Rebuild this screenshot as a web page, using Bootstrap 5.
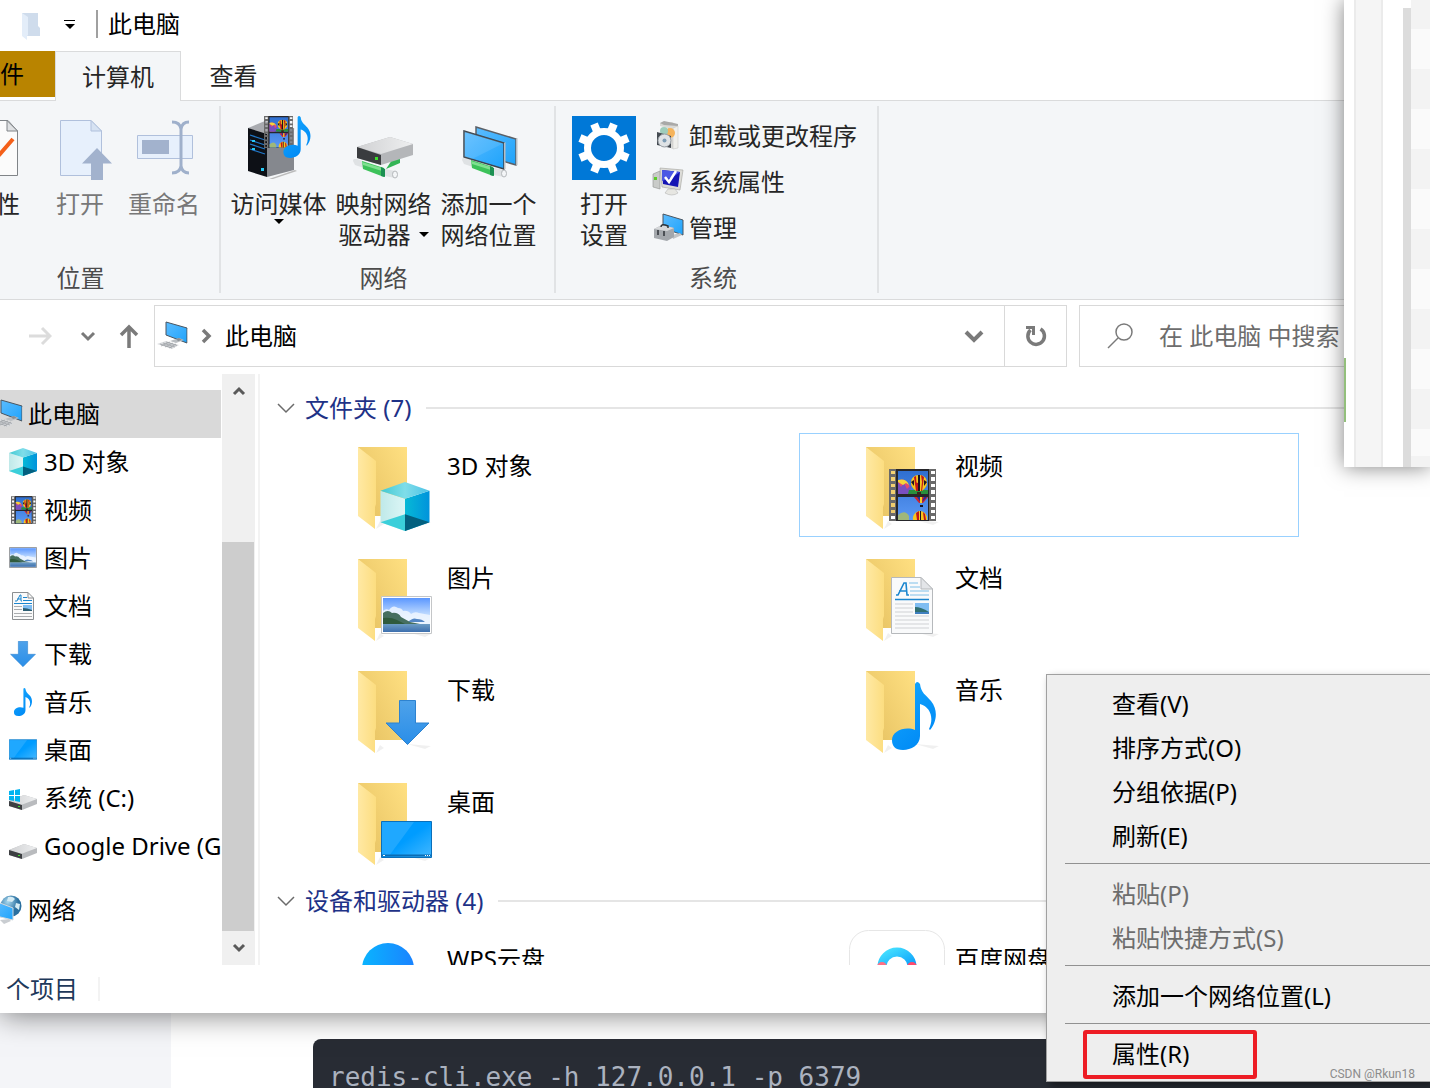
<!DOCTYPE html>
<html lang="zh-CN">
<head>
<meta charset="utf-8">
<meta name="viewport" content="width=device-width, initial-scale=1">
<title>此电脑</title>
<link href="https://cdn.jsdelivr.net/npm/bootstrap@5.3.0/dist/css/bootstrap.min.css" rel="stylesheet">
<style>
  body { font-family: "Noto Sans", "Noto Sans CJK SC", sans-serif; font-size: 24px; line-height: 32px; color: #000; background: #fff; }
  button, input { font: inherit; color: inherit; }
  button { background: none; border: 0; padding: 0; }
  a { color: inherit; text-decoration: none; }
  svg { flex: none; display: block; }
  .ico { width: 32px; height: 32px; }

  .explorer { min-height: 0; background: #fff; box-shadow: 0 2px 28px rgba(0,0,0,.5); z-index: 1; }
  .title-row { height: 51px; padding: 0 0 4px 20px; }
  .title-rule { width: 2px; height: 28px; background: #a0a0a0; margin: 0 10px 0 20px; }

  .tab-row { height: 50px; border-bottom: 1px solid #dadbdc; }
  .tab-file { width: 55px; height: 46px; background: #b98400; padding-right: 32px; overflow: hidden; }
  .tab-on { width: 126px; height: 50px; background: #f4f6f8; border: 1px solid #dadbdc; border-bottom: 0; color: #262626; }
  .tab-off { width: 105px; color: #262626; }

  .ribbon { background: #f4f6f8; border-bottom: 1px solid #dadbdc; height: 199px; color: #262626; }
  .r-group { height: 187px; margin-top: 5px; border-right: 2px solid #e1e3e5; }
  .r-place { width: 221px; }
  .r-net { padding: 0 13px 0 5px; }
  .r-sys { width: 323px; padding-right: 7px; }
  .r-btn { width: 105px; padding-top: 10px; line-height: 31px; white-space: nowrap; }
  .r-btn > svg { width: 64px; height: 64px; margin-bottom: 8px; }
  .r-btn:disabled { color: #787878; }
  .w-cut { width: 40px; padding-right: 20px; }
  .w-open { width: 80px; }
  .w-name { width: 88px; }
  .w-set { width: 96px; }
  .r-list { padding-top: 7px; }
  .r-list button { height: 46px; gap: 5px; }
  .r-name { color: #4c4c4c; margin-bottom: -1px; }
  .r-place .r-name { padding-right: 58px; }

  .addr-row { height: 74px; padding: 5px 0 7px 28px; }
  .addr-box { height: 62px; border: 1px solid #d9d9d9; padding-left: 2px; }
  .refresh { width: 62px; height: 60px; border-left: 1px solid #d9d9d9; }
  .find-box { width: 351px; height: 62px; border: 1px solid #d9d9d9; padding-left: 27px; gap: 26px; }
  .find-box input { border: 0; outline: 0; padding: 0; background: none; min-width: 0; }
  .find-box input::placeholder { color: #6d6d6d; opacity: 1; }

  .panes { min-height: 0; }
  .tree { width: 222px; padding: 16px 1px 0 0; white-space: nowrap; }
  .tree a { height: 48px; gap: 4px; padding-left: 8px; overflow: hidden; }
  .tree .root { padding-left: 0; }
  .tree .root svg { margin-left: -8px; }
  .tree .on { background: #d9d9d9; }
  .tree .apart { margin-top: 16px; }
  .s-bar { width: 33px; background: #f0f0f0; }
  .s-bar button { height: 34px; }
  .s-thumb { width: 32px; height: 389px; background: #cdcdcd; margin-top: 134px; }
  .split { width: 5px; border-right: 2px solid #f3f3f3; }

  .files { padding-top: 9px; }
  .sect { height: 50px; padding-left: 17px; gap: 10px; color: #1e3287; }
  .sect + .tiles + .sect { margin-top: 3px; }
  .sect i { height: 2px; background: #e5e5e5; margin-left: 5px; }
  .tiles { display: grid; grid-template-columns: repeat(auto-fill, 500px); gap: 8px; padding-left: 31px; }
  .tile { height: 104px; padding: 3px 0 0 49px; gap: 10px; border: 1px solid transparent; }
  .tile.hot { border-color: #99d1ff; }
  .tile svg { width: 96px; height: 96px; }
  .tile span { margin-top: 13px; }

  .status { height: 48px; padding-left: 6px; color: #1e395b; }
  .status i { width: 2px; height: 24px; background: #f3f3f3; margin-left: 20px; }

  .article { height: 75px; }
  .side { width: 171px; background: #f4f5f8; }
  .snippet { margin: 26px 0 0 142px; padding: 22px 16px; background: #282c34; color: #abb2bf; border-radius: 8px 0 0 0; font: 26px/32px "DejaVu Sans Mono", monospace; overflow: hidden; }

  .other { top: 0; right: 0; width: 86px; height: 467px; background: #fff; box-shadow: 0 0 20px rgba(0,0,0,.5); z-index: 2; }
  .other .mark-green { width: 2px; height: 64px; margin-top: 358px; background: #93bf7c; }
  .other .band { width: 29px; margin-left: 8px; background: #f5f5f5; border: solid #ebebeb; border-width: 0 2px; }
  .other .rail { width: 8px; margin: 8px 0 0 20px; background: #dcdcdc; }
  .other .rows { background: repeating-linear-gradient(#f3f3f3 0 40px, #fafafa 40px 80px) 0 -11px; }

  .ctx { top: 674px; right: 0; width: 384px; padding: 7px 0 5px; background: #eee; border: 1px solid #a0a0a0; border-right: 0; box-shadow: 4px 4px 8px rgba(0,0,0,.45); z-index: 3; }
  .ctx button { display: block; width: 100%; height: 44px; padding-left: 65px; text-align: left; }
  .ctx button:disabled { color: #6d6d6d; }
  .ctx hr { margin: 5px 0 8px 18px; border-top: 1px solid #919191; opacity: 1; }
  .ring { left: 36px; bottom: 2px; width: 174px; height: 49px; border: 4px solid #ed1c24; border-radius: 3px; pointer-events: none; }
  .credit { right: 15px; bottom: 0; font: 12px/14px Roboto, sans-serif; color: #8c8c8c; }
</style>
</head>
<body>
<svg width="0" height="0" class="position-absolute" aria-hidden="true">
  <defs>
    <linearGradient id="gBack" x1="0" x2="1" y1=".7" y2="0"><stop offset="0" stop-color="#e8c464"/><stop offset="1" stop-color="#ffe082"/></linearGradient>
    <linearGradient id="gFlap" x1="0" x2="1"><stop offset="0" stop-color="#ffe9a4"/><stop offset="1" stop-color="#fcdd80"/></linearGradient>
    <linearGradient id="gCubeR"><stop offset="0" stop-color="#07b9d6"/><stop offset="1" stop-color="#0093dc"/></linearGradient>
    <linearGradient id="gCubeL"><stop offset="0" stop-color="#bfe9e9"/><stop offset="1" stop-color="#dcf6f6"/></linearGradient>
    <linearGradient id="gCubeT"><stop offset="0" stop-color="#40c9d2"/><stop offset=".5" stop-color="#7fdde9"/><stop offset="1" stop-color="#4cc2e6"/></linearGradient>
    <linearGradient id="gSky" x2="0" y2="1"><stop offset="0" stop-color="#5b97ff"/><stop offset=".6" stop-color="#d7ebff"/></linearGradient>
    <linearGradient id="gSea" x2="0" y2="1"><stop offset="0" stop-color="#6c9cc4"/><stop offset="1" stop-color="#3d6fae"/></linearGradient>
    <linearGradient id="gDown" x2="0" y2="1"><stop offset="0" stop-color="#4ea2ea"/><stop offset="1" stop-color="#2a8ee8"/></linearGradient>
    <linearGradient id="gNote" x2=".6" y2="1"><stop offset="0" stop-color="#17a9ff"/><stop offset="1" stop-color="#008af5"/></linearGradient>
    <linearGradient id="gDesk" x1="0" x2="1" y2="1"><stop offset=".5" stop-color="#009cff"/><stop offset="1" stop-color="#44b8ff"/></linearGradient>
    <linearGradient id="gScr" x2="1" y2="1"><stop offset="0" stop-color="#5bbcff"/><stop offset="1" stop-color="#1ea3fb"/></linearGradient>
    <linearGradient id="gTop" x2="1"><stop offset="0" stop-color="#d0d1d3"/><stop offset="1" stop-color="#eeeff0"/></linearGradient>
    <linearGradient id="gBaidu" x2="1" y2="1"><stop offset="0" stop-color="#45e0ff"/><stop offset="1" stop-color="#0a9dfb"/></linearGradient>
    <linearGradient id="gWps" x2="1" y2="0"><stop offset="0" stop-color="#0ab4ff"/><stop offset="1" stop-color="#1a83ff"/></linearGradient>
    <linearGradient id="gFilmSky" x2="0" y2="1"><stop offset="0" stop-color="#2f6fd0"/><stop offset="1" stop-color="#5a98f5"/></linearGradient>
    <radialGradient id="gGlobe" cx=".35" cy=".3"><stop offset="0" stop-color="#a8d8f0"/><stop offset="1" stop-color="#2a6f9f"/></radialGradient>
  </defs>

  <symbol id="folder" viewBox="0 0 96 96">
    <path d="M35 92l8-5-4-3zM66 83l24 2-6 3z" fill="#000" opacity=".06"/>
    <path d="M17 10h49v69H17z" fill="url(#gBack)"/>
    <path d="M17 10l18 14v43l-1 3v22L17 79z" fill="url(#gFlap)"/>
  </symbol>

  <symbol id="cube" viewBox="0 0 50 50">
    <path d="M0 9L25 17V50L0 41z" fill="url(#gCubeL)"/>
    <path d="M50 9L25 17V50L50 41z" fill="url(#gCubeR)"/>
    <path d="M25 0L50 9 25 17 0 9z" fill="url(#gCubeT)"/>
    <path d="M0 41L25 33V50z" fill="#3bcfda"/>
    <path d="M50 41L25 33V50z" fill="#03607f"/>
  </symbol>

  <symbol id="balloon" viewBox="0 0 16 20">
    <path d="M8 0c5 0 8 3 8 8 0 4-3 6-5 8H5C3 14 0 12 0 8c0-5 3-8 8-8z" fill="#f7c51e"/>
    <path d="M3 2l2 14h1L5 1zM8 0L7 8l-3-1 1 9h3zM10 0l3 2-2 14h-1l1-9z" fill="#c0151a"/>
    <path d="M7 0h2v16H7zM0 7l3-2v6zM16 7l-3-2v6z" fill="#1c1420"/>
    <path d="M6 17h4v3H6z" fill="#3a2418"/>
  </symbol>
  <symbol id="film" viewBox="0 0 47 52">
    <path fill="#6a6a6a" fill-rule="evenodd" d="M0 0h47v52H0zM2 2v3h4V2zm0 6v4h4V8zm0 7v3h4v-3zm0 6v4h4v-4zm0 7v3h4v-3zm0 6v4h4v-4zm0 7v3h4v-3zm0 6v3h4v-3zM42 2v3h4V2zm0 6v4h4V8zm0 7v3h4v-3zm0 6v4h4v-4zm0 7v3h4v-3zm0 6v4h4v-4zm0 7v3h4v-3zm0 6v3h4v-3z"/>
    <path d="M7 0h33v52H7z" fill="#26262a"/>
    <path d="M9 2h30v23H9zM9 28h30v23H9z" fill="url(#gFilmSky)"/>
    <path d="M9 12q7-5 12 6l-4 7H9z" fill="#e24a70"/>
    <path d="M9 13l3 5 3-4 3 6 4-4-1 9H9z" fill="#7a4fc0"/>
    <path d="M9 11q8-2 11 5l-3-2-3 2-5-3z" fill="#f6d53a"/>
    <path d="M20 21h19v4H19z" fill="#2a8f3c"/>
    <path d="M9 46q7-6 11 1v4H9z" fill="#9fb77a"/>
    <use href="#balloon" x="22" y="6" width="16" height="20"/>
    <path d="M25 28h14l-5 6h-4z" fill="#d4232a"/><path d="M28 28h3l1 6zM35 28h3l-5 5z" fill="#1d2fa0"/><path d="M31 28h2v6h-2z" fill="#f3d028"/><path d="M31 36h3v2h-3z" fill="#1c1420"/>
    <path d="M24 51c-1-5 3-9 7-9s8 4 7 9z" fill="#f7c51e"/><path d="M27 44l1 7h2V42zM34 43l1 8h2l-1-6z" fill="#c0151a"/><path d="M31 42h1v9h-1z" fill="#1c1420"/>
  </symbol>

  <symbol id="photo" viewBox="0 0 51 38">
    <path d="M.5.500h50v37H.5z" fill="#fff" stroke="#c4c6c8"/>
    <path d="M2 2h47v34H2z" fill="url(#gSky)"/>
    <path d="M2 15q3-3 6-1 4-6 9-2 4 0 5 3 5-1 8 3 4-3 8-1l11 2v9H2z" fill="#eef6ff" opacity=".85"/>
    <path d="M27 26q5-5 9-3 5 0 8 3z" fill="#5486c4"/>
    <path d="M2 17q5-4 9 0 6-1 9 4l9 5 10 2H2z" fill="#466f60"/>
    <path d="M2 22q8-1 14 2l8 4H2z" fill="#2f5a3c"/>
    <path d="M2 28h47v8H2z" fill="url(#gSea)"/>
  </symbol>

  <symbol id="paper" viewBox="0 0 42 57">
    <path d="M.5.500H30L41.500 12V56.500H.5z" fill="#f9fafb" stroke="#b6b9bc"/>
    <path d="M30 .5V12h11.500z" fill="#e3e5e8" stroke="#b6b9bc"/>
    <path d="M5 18h2l6-12h2l1 12h2M8 14h7" fill="none" stroke="#1b86cf" stroke-width="1.600"/>
    <path d="M18 6h9M19 10h10M19 14h19M19 18h19" stroke="#7fc0e8"/>
    <path d="M4 22.500h34" stroke="#1b86cf" stroke-width="1.500"/>
    <path d="M4 27h18M4 31h18M4 35h18M4 39h34M4 43h34M4 47h34M4 51h34" stroke="#cfd1d4"/>
    <path d="M24 26h14v11H24z" fill="#7fbdf2"/><path d="M24 30q6 0 14 5v2H24z" fill="#2f6f72"/><path d="M24 35h14v2H24z" fill="#3f7fc0"/>
  </symbol>
  <symbol id="down" viewBox="0 0 45 45"><path d="M14.500.5h16V23H44L22.500 44.500 1 23h13.500z" fill="url(#gDown)" stroke="#2e83d0"/></symbol>
  <symbol id="tune" viewBox="0 0 44 68"><path d="M23 2q2-4 5 0c1 9 6 11 11 17 8 10 5 22-1 29l-1-1c5-10 2-22-9-25v32c0 9-9 14-17 14S0 64 0 58c0-9 13-14 23-10z" fill="url(#gNote)"/></symbol>
  <symbol id="desk" viewBox="0 0 51 37"><path d="M.5.500h50v36H.5z" fill="url(#gDesk)" stroke="#0a6fba"/><path d="M1 1h32L8 35H1z" fill="#fff" opacity=".12"/><path d="M1 34.500h49" stroke="#0b6cb4" stroke-width="2"/><path d="M2 34.500h2M44 34.500h1M46 34.500h1M48 34.500h1" stroke="#fff"/></symbol>
  <symbol id="pc" viewBox="0 0 32 32">
    <path d="M9 2l21 6v15L9 15z" fill="url(#gScr)" stroke="#4a5560"/>
    <path d="M30 8l1 1v14l-1 0z" fill="#ccc"/>
    <path d="M13 21l9-3 5 2-8 3z" fill="#b9bdc1"/><path d="M19 19l2 2 4-1-3-2z" fill="#888d92"/>
    <path d="M0 24l9-3 13 4-7 4z" fill="#d8dadd"/><path d="M3 24l12 4M6 23l12 4M9 22l11 3.500M4 26l9-4M8 27l8-4M12 28l7-4" stroke="#989ca1" stroke-width=".7" fill="none"/>
  </symbol>
  <symbol id="drive" viewBox="0 0 28 15">
    <path d="M0 6L15 0l13 4v5l-15 6L0 11z" fill="#b9bbbe"/><path d="M0 6L15 0l13 4-16 6z" fill="url(#gTop)"/><path d="M0 6l13 4v5L0 11z" fill="#3d3f42"/><path d="M9 11h2v1H9z" fill="#3ee02c"/>
  </symbol>
  <symbol id="pipe" viewBox="0 0 46 20">
    <path d="M0 2q0-3 4-2l10 4v6L2 6z" fill="#dfe2e4"/><path d="M32 10l10 2v7l-10-2z" fill="#dfe2e4"/>
    <path d="M9 2l22 7v9L10 10z" fill="#3cc25a"/><path d="M9 3l20 6v3L10 6z" fill="#7fe090"/><path d="M28 8l4 2v8l-4-1z" fill="#1b8f52"/><ellipse cx="42" cy="15.500" rx="2.500" ry="3.500" fill="#f4f6f8" stroke="#b4b8bb"/>
  </symbol>
</svg>

<div class="d-flex flex-column vh-100 overflow-hidden position-relative">
  <section class="explorer d-flex flex-column flex-grow-1 position-relative" aria-label="此电脑">
    <header class="title-row d-flex align-items-center flex-shrink-0">
      <svg width="24" height="32" viewBox="0 0 24 32"><path d="M2 5h16v13l2 2v8H2z" fill="#cfdcec"/><path d="M2 5l6 4v18l-1 1v4L2 28z" fill="#e3edf9"/></svg>
      <button type="button" class="ms-3" aria-label="自定义快速访问工具栏"><svg width="16" height="16" viewBox="0 0 16 16"><path d="M4 4.500h11" stroke="#000"/><path d="M5 8h10l-5 5z"/></svg></button>
      <div class="title-rule"></div>
      <span>此电脑</span>
    </header>

    <nav class="tab-row d-flex flex-shrink-0">
      <button type="button" class="tab-file text-end">件</button>
      <button type="button" class="tab-on">计算机</button>
      <button type="button" class="tab-off">查看</button>
    </nav>

    <div class="ribbon d-flex flex-shrink-0">
      <div class="r-group r-place d-flex flex-column justify-content-between">
        <div class="d-flex">
          <button type="button" class="r-btn w-cut d-flex flex-column align-items-end">
            <svg viewBox="0 0 64 64"><path d="M5.500 4.500H52L61.500 15V59.500H5.500z" fill="#fbfbfb" stroke="#808488"/><path d="M51 4.500V15h10.500z" fill="#dfe1e3" stroke="#808488"/><path d="M40 35l4 3 13-15" fill="none" stroke="#f4601a" stroke-width="4"/></svg>
            <span>性</span></button>
          <button type="button" class="r-btn w-open d-flex flex-column align-items-center" disabled>
            <svg viewBox="0 0 64 64"><path d="M12.500 4.500H43L53.500 15V59.500H12.500z" fill="#e7f0fc" stroke="#b0c0dc"/><path d="M43 4.500V15h10.500z" fill="#d6e2f2" stroke="#b0c0dc"/><path d="M49 32l15 15.500H55V64H43V47.500H34z" fill="#a2b2cd"/></svg>
            <span>打开</span></button>
          <button type="button" class="r-btn w-name d-flex flex-column align-items-center" disabled>
            <svg viewBox="0 0 64 64"><path d="M5.500 19.500h55v23h-55z" fill="#e7f0fc" stroke="#b0c0dc"/><path d="M10 24h27v14H10z" fill="#a2b2cd"/><path d="M40 6q8 0 9 7 1-7 8-7M40 57q8 0 9-7 1 7 8 7M49 12v40" fill="none" stroke="#9fb0cb" stroke-width="3"/></svg>
            <span>重命名</span></button>
        </div>
        <div class="r-name text-center">位置</div>
      </div>

      <div class="r-group r-net d-flex flex-column justify-content-between">
        <div class="d-flex">
          <button type="button" class="r-btn d-flex flex-column align-items-center">
            <svg viewBox="0 0 64 64"><path d="M22 63l26-9 2 1-24 8z" fill="#bbb"/><path d="M1 12L18 5l30 8-28 7z" fill="#a9abb0"/><path d="M20 17l27-5v42L20 61z" fill="#85888e"/><path d="M1 12l19 6v43L1 55z" fill="#0d1016"/><path d="M3 19l15 5M3 28l15 5M3 33l15 5M3 24l15 5" stroke="#2177c8" stroke-width="1.300"/><path d="M5 24h3v2H5zM5 32h3v2H5zM14 52h3v3h-3z" fill="#25c8f5"/><use href="#film" x="17" y="0" width="29" height="32" preserveAspectRatio="none"/><use href="#tune" x="36" y="0" width="28" height="42" preserveAspectRatio="none"/></svg>
            <span>访问媒体</span>
            <svg class="mt-0" style="width:10px;height:5px" viewBox="0 0 10 5"><path d="M0 0h10L5 5z"/></svg></button>
          <button type="button" class="r-btn d-flex flex-column align-items-center">
            <svg viewBox="0 0 64 64"><use href="#pipe" x="1" y="43" width="46" height="20"/><path d="M40 44l8-2v5l-14 6z" fill="#34b556"/><path d="M5 31L38 21l23 7v11L29 49 5 42z" fill="#b4b6b9"/><path d="M5 31L38 21l23 7-32 10z" fill="url(#gTop)"/><path d="M5 31l24 8v10L5 42z" fill="#3a3c3f"/><path d="M23 41h3v3h-3z" fill="#3ee02c"/></svg>
            <span>映射网络</span>
            <span class="d-flex align-items-center">驱动器<svg class="ms-2" width="10" height="5" viewBox="0 0 10 5"><path d="M0 0h10L5 5z"/></svg></span></button>
          <button type="button" class="r-btn d-flex flex-column align-items-center">
            <svg viewBox="0 0 64 64"><use href="#pipe" x="5" y="42" width="46" height="20"/><path d="M19 11l40 12v26L19 37z" fill="url(#gScr)" stroke="#5b6067" stroke-width="1.500"/><path d="M59 23l1.500-1v27L59 50z" fill="#b9bdc1"/><path d="M7 15l40 12v26L7 41z" fill="url(#gScr)" stroke="#3b444d" stroke-width="1.500"/><path d="M7 15l40 12L15 43l-8-2z" fill="#fff" opacity=".1"/><path d="M47 27l1.500-1v27L47 54z" fill="#b9bdc1"/></svg>
            <span>添加一个</span><span>网络位置</span></button>
        </div>
        <div class="r-name text-center">网络</div>
      </div>

      <div class="r-group r-sys d-flex flex-column justify-content-between">
        <div class="d-flex">
          <button type="button" class="r-btn w-set d-flex flex-column align-items-center">
            <svg viewBox="0 0 64 64"><path d="M0 0h64v64H0z" fill="#0078d7"/><g fill="#fff"><g id="cogs"><path id="tooth" d="M28 13V6h8v7z" transform="rotate(22.500 32 32)"/><use href="#tooth" transform="rotate(45 32 32)"/><use href="#tooth" transform="rotate(90 32 32)"/><use href="#tooth" transform="rotate(135 32 32)"/></g><use href="#cogs" transform="rotate(180 32 32)"/></g><circle cx="32" cy="32" r="16.500" fill="none" stroke="#fff" stroke-width="7"/></svg>
            <span>打开</span><span>设置</span></button>
          <div class="r-list">
            <button type="button" class="d-flex align-items-center"><svg class="ico" viewBox="0 0 32 32"><path d="M8 3l12-1 6 3v22l-6 2-4-4V8L8 6z" fill="#d9d9d6"/><path d="M8 3l4-2 14 3v2L12 5z" fill="#a9a9a8"/><path d="M21 8l5-2v22l-5 1z" fill="#efefec" stroke="#c2c2c0" stroke-width=".5"/><circle cx="18" cy="13" r="5" fill="#f5b35a"/><circle cx="12" cy="11" r="4" fill="#9fcdbb"/><path d="M5 12l14 4v12L5 25z" fill="#454b52"/><circle cx="12.500" cy="20.500" r="6.500" fill="#dfe3e6" stroke="#9aa0a6"/><circle cx="12.500" cy="20.500" r="2" fill="#7d9cb4"/></svg>卸载或更改程序</button>
            <button type="button" class="d-flex align-items-center"><svg class="ico" viewBox="0 0 32 32"><path d="M1 8l7-3v18l-7-2z" fill="#c9cbc9" stroke="#8f918f" stroke-width=".6"/><path d="M2 11h3v3H2z" fill="#5ccc2a"/><path d="M8 2l23 2-3 20L10 21z" fill="#dcdcd8" stroke="#a2a29e" stroke-width=".6"/><path d="M10 4l18 2-2 15-15-3z" fill="#1414b4"/><path d="M10 4l18 2-7 5-11 4z" fill="#4a58e4"/><path d="M13 11l4 5 7-11" fill="none" stroke="#fff" stroke-width="2.500"/><path d="M16 23h7l3 4q-6 4-13 0z" fill="#e6e6e2" stroke="#aaa" stroke-width=".5"/></svg>系统属性</button>
            <button type="button" class="d-flex align-items-center"><svg class="ico" viewBox="0 0 32 32"><path d="M11 2l20 6v15L11 16z" fill="url(#gScr)" stroke="#4a5560"/><path d="M20 23l8-2 2 2-9 4z" fill="#c0c3c6"/><path d="M2 17l8-4 12 3v9l-7 4-13-3z" fill="#a3a7ac"/><path d="M2 17l8-4 12 3-7 3z" fill="#d6d8da"/><path d="M9 15q0-4 7-1v2" fill="none" stroke="#2f3337" stroke-width="1.500"/><path d="M5 18h2v5H5zM11 19h2v5h-2z" fill="#4b4f55"/></svg>管理</button>
          </div>
        </div>
        <div class="r-name text-center">系统</div>
      </div>
    </div>

    <div class="addr-row d-flex align-items-center flex-shrink-0">
      <button type="button" aria-label="前进" disabled><svg width="24" height="24" viewBox="0 0 24 24"><path d="M1 12h20M14 4l8 8-8 8" fill="none" stroke="#dcdcdc" stroke-width="3"/></svg></button>
      <button type="button" style="margin-left:28px" aria-label="最近位置"><svg width="16" height="16" viewBox="0 0 16 16"><path d="M2 5l6 6 6-6" fill="none" stroke="#7a7a7a" stroke-width="3"/></svg></button>
      <button type="button" style="margin-left:21px" aria-label="上移"><svg width="24" height="24" viewBox="0 0 24 24"><path d="M12 24V3M4 11l8-8 8 8" fill="none" stroke="#7a7a7a" stroke-width="3.500"/></svg></button>
      <div class="addr-box d-flex align-items-center flex-grow-1" style="margin-left:13px">
        <svg class="ico" viewBox="0 0 32 32"><use href="#pc"/></svg>
        <svg class="mx-2" width="20" height="16" viewBox="0 0 20 16"><path d="M6 2l6 6-6 6" fill="none" stroke="#7a7a7a" stroke-width="3.500"/></svg>
        <a href="#">此电脑</a>
        <button type="button" class="ms-auto me-3" aria-label="展开"><svg width="28" height="16" viewBox="0 0 28 16"><path d="M6 4l8 8 8-8" fill="none" stroke="#7a7a7a" stroke-width="4"/></svg></button>
        <button type="button" class="refresh d-flex align-items-center justify-content-center" aria-label="刷新"><svg width="24" height="24" viewBox="0 0 24 24"><path d="M16.500 5a8.300 8.300 0 1 1-10 1" fill="none" stroke="#7a7a7a" stroke-width="3.500"/><path d="M2 2h9v9H8V5H2z" fill="#7a7a7a"/></svg></button>
      </div>
      <label class="find-box d-flex align-items-center" style="margin-left:12px">
        <svg width="26" height="26" viewBox="0 0 26 26"><circle cx="17" cy="9" r="8" fill="none" stroke="#7a7a7a" stroke-width="1.500"/><path d="M11 15L1 25" stroke="#7a7a7a" stroke-width="1.500"/></svg>
        <input type="text" placeholder="在 此电脑 中搜索" aria-label="搜索">
      </label>
    </div>

    <div class="panes d-flex flex-grow-1 overflow-hidden">
      <nav class="tree flex-shrink-0 overflow-hidden">
        <a href="#" class="root on d-flex align-items-center"><svg class="ico" viewBox="0 0 32 32"><use href="#pc"/></svg>此电脑</a>
        <a href="#" class="d-flex align-items-center"><svg class="ico" viewBox="0 0 32 32"><use href="#cube" x="1" y="2" width="28" height="28"/></svg>3D 对象</a>
        <a href="#" class="d-flex align-items-center"><svg class="ico" viewBox="0 0 32 32"><use href="#film" x="3" y="2" width="25" height="28"/></svg>视频</a>
        <a href="#" class="d-flex align-items-center"><svg class="ico" viewBox="0 0 32 32"><use href="#photo" x="1" y="5" width="28" height="21"/><path d="M1.500 5.500h27v20h-27z" fill="none" stroke="#9da0a3"/></svg>图片</a>
        <a href="#" class="d-flex align-items-center"><svg class="ico" viewBox="0 0 32 32"><path d="M4.500 2.500H20L25.500 8V29.500h-21z" fill="#fafafa" stroke="#8b8e91"/><path d="M20 2.500V8h5.500" fill="none" stroke="#8b8e91"/><path d="M7 11h2l3-6h1v6h1M9 9h4" fill="none" stroke="#1b86cf"/><path d="M6 13.500h18" stroke="#1b86cf"/><path d="M15 7.500h4M15 10.500h9" stroke="#1b86cf"/><path d="M6 16.500h8M6 19.500h8M6 23.500h18M6 26.500h18" stroke="#a9acaf"/><path d="M15 15h9v6h-9z" fill="#7fbdf2"/><path d="M15 18q4 0 9 2v1h-9z" fill="#2b5d72"/></svg>文档</a>
        <a href="#" class="d-flex align-items-center"><svg class="ico" viewBox="0 0 32 32"><use href="#down" x="2" y="3" width="26" height="26"/></svg>下载</a>
        <a href="#" class="d-flex align-items-center"><svg class="ico" viewBox="0 0 32 32"><use href="#tune" x="5" y="2" width="20" height="28"/></svg>音乐</a>
        <a href="#" class="d-flex align-items-center"><svg class="ico" viewBox="0 0 32 32"><use href="#desk" x="1" y="5" width="28" height="21"/></svg>桌面</a>
        <a href="#" class="d-flex align-items-center"><svg class="ico" viewBox="0 0 32 32"><use href="#drive" x="1" y="13" width="28" height="15"/><path d="M1 9l5-1v5H1zM7 8l5-1v6H7zM1 14h5v5l-5-1zM7 14h5v6l-5-1z" fill="#00b4f0"/></svg>系统 (C:)</a>
        <a href="#" class="d-flex align-items-center"><svg class="ico" viewBox="0 0 32 32"><use href="#drive" x="1" y="14" width="28" height="15"/></svg>Google Drive (G:)</a>
        <a href="#" class="root apart d-flex align-items-center"><svg class="ico" viewBox="0 0 32 32"><circle cx="19" cy="12" r="10.500" fill="url(#gGlobe)"/><path d="M16 3q5-1 7 2l-3 3-5-1zM24 9l4 1-1 6-4-3z" fill="#d5ecf5"/><path d="M8 9l13 5v12L4 22z" fill="url(#gScr)" stroke="#d0d8de"/><path d="M8 26l9-1 2 2-7 3z" fill="#c9cdd1"/></svg>网络</a>
      </nav>
      <div class="s-bar d-flex flex-column flex-shrink-0">
        <button type="button" class="d-flex align-items-center justify-content-center" aria-label="向上滚动"><svg width="14" height="10" viewBox="0 0 14 10"><path d="M2 8l5-5 5 5" fill="none" stroke="#5a5a5a" stroke-width="3"/></svg></button>
        <div class="s-thumb"></div>
        <button type="button" class="d-flex align-items-center justify-content-center" aria-label="向下滚动"><svg width="14" height="10" viewBox="0 0 14 10"><path d="M2 2l5 5 5-5" fill="none" stroke="#5a5a5a" stroke-width="3"/></svg></button>
      </div>
      <div class="split flex-shrink-0"></div>

      <div class="files flex-grow-1 overflow-hidden">
        <div class="sect d-flex align-items-center"><svg width="18" height="12" viewBox="0 0 18 12"><path d="M1 2l8 8 8-8" fill="none" stroke="#6b6b6b" stroke-width="1.500"/></svg>文件夹 (7)<i class="flex-grow-1"></i></div>
        <div class="tiles">
          <a href="#" class="tile d-flex align-items-start"><svg viewBox="0 0 96 96"><use href="#folder"/><use href="#cube" x="39" y="45" width="50" height="49"/></svg><span>3D 对象</span></a>
          <a href="#" class="tile hot d-flex align-items-start"><svg viewBox="0 0 96 96"><use href="#folder"/><use href="#film" x="40" y="32" width="47" height="52"/></svg><span>视频</span></a>
          <a href="#" class="tile d-flex align-items-start"><svg viewBox="0 0 96 96"><use href="#folder"/><use href="#photo" x="40" y="47" width="51" height="38"/></svg><span>图片</span></a>
          <a href="#" class="tile d-flex align-items-start"><svg viewBox="0 0 96 96"><use href="#folder"/><use href="#paper" x="42" y="28" width="42" height="57"/></svg><span>文档</span></a>
          <a href="#" class="tile d-flex align-items-start"><svg viewBox="0 0 96 96"><use href="#folder"/><use href="#down" x="44" y="39" width="45" height="45"/></svg><span>下载</span></a>
          <a href="#" class="tile d-flex align-items-start"><svg viewBox="0 0 96 96"><use href="#folder"/><use href="#tune" x="43" y="21" width="44" height="68"/></svg><span>音乐</span></a>
          <a href="#" class="tile d-flex align-items-start"><svg viewBox="0 0 96 96"><use href="#folder"/><use href="#desk" x="40" y="48" width="51" height="37"/></svg><span>桌面</span></a>
        </div>
        <div class="sect d-flex align-items-center"><svg width="18" height="12" viewBox="0 0 18 12"><path d="M1 2l8 8 8-8" fill="none" stroke="#6b6b6b" stroke-width="1.500"/></svg>设备和驱动器 (4)<i class="flex-grow-1"></i></div>
        <div class="tiles">
          <a href="#" class="tile d-flex align-items-start"><svg viewBox="0 0 96 96"><circle cx="47" cy="39" r="26" fill="url(#gWps)"/></svg><span>WPS云盘</span></a>
          <a href="#" class="tile d-flex align-items-start"><svg viewBox="0 0 96 96"><rect x=".5" y=".5" width="95" height="95" rx="19" fill="#fff" stroke="#e6e6e6"/><path d="M33 37a15 15 0 0 1 30 0" fill="none" stroke="url(#gBaidu)" stroke-width="9"/><circle cx="33" cy="37" r="5" fill="#ff7085"/><circle cx="63" cy="37" r="5" fill="#ff4a6e"/></svg><span>百度网盘</span></a>
        </div>
      </div>
    </div>

    <footer class="status d-flex align-items-center flex-shrink-0">个项目<i></i></footer>
  </section>

  <section class="article d-flex flex-shrink-0 overflow-hidden">
    <div class="side flex-shrink-0"></div>
    <pre class="snippet flex-grow-1">redis-cli.exe -h 127.0.0.1 -p 6379</pre>
  </section>

  <div class="other position-absolute d-flex">
    <div class="mark-green"></div>
    <div class="band"></div>
    <div class="rail"></div>
    <div class="rows flex-grow-1"></div>
  </div>

  <div class="ctx position-absolute" role="menu">
    <button type="button" role="menuitem">查看(V)</button>
    <button type="button" role="menuitem">排序方式(O)</button>
    <button type="button" role="menuitem">分组依据(P)</button>
    <button type="button" role="menuitem">刷新(E)</button>
    <hr>
    <button type="button" role="menuitem" disabled>粘贴(P)</button>
    <button type="button" role="menuitem" disabled>粘贴快捷方式(S)</button>
    <hr>
    <button type="button" role="menuitem">添加一个网络位置(L)</button>
    <hr>
    <button type="button" role="menuitem">属性(R)</button>
    <div class="ring position-absolute"></div>
    <div class="credit position-absolute">CSDN @Rkun18</div>
  </div>
</div>
<script src="https://cdn.jsdelivr.net/npm/bootstrap@5.3.0/dist/js/bootstrap.bundle.min.js"></script>
</body>
</html>
